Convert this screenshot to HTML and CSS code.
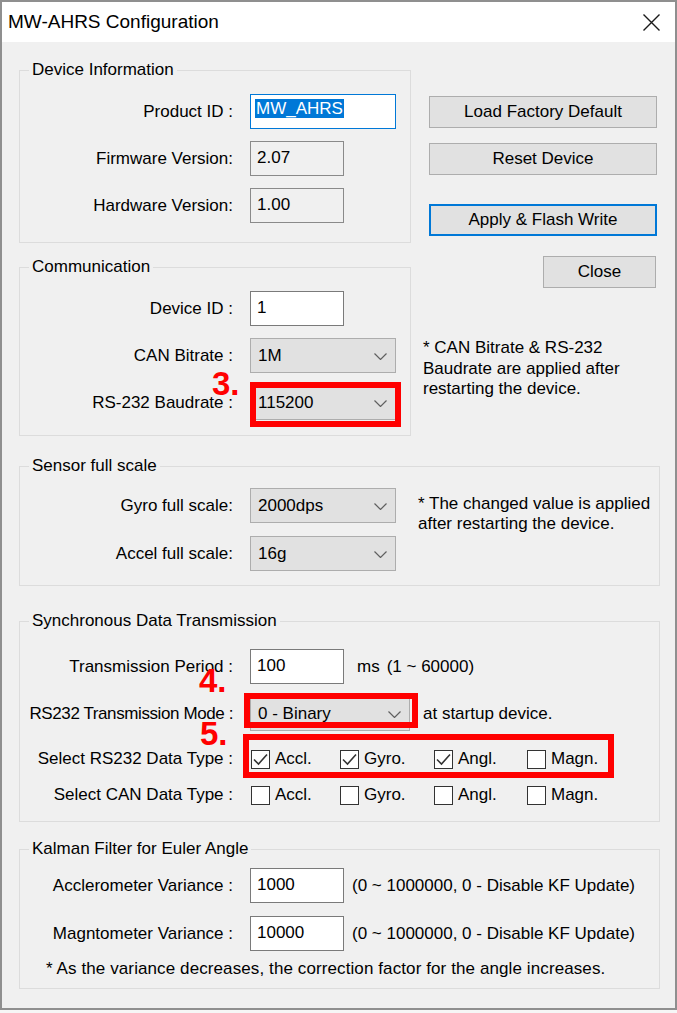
FILE: index.html
```html
<!DOCTYPE html>
<html lang="en">
<head>
    <meta charset="UTF-8">
    <meta name="viewport" content="width=device-width, initial-scale=1.0">
    <link rel="stylesheet" href="styles.css">
    <title>MW-AHRS Configuration</title>
</head>
<body>
<div class="window">
    <div class="titlebar">
        <span class="title">MW-AHRS Configuration</span>
        <svg class="close" width="17" height="17" viewBox="0 0 17 17">
            <path d="M0.5 0.5 L16.5 16.5 M16.5 0.5 L0.5 16.5" stroke="#1a1a1a" stroke-width="1.4" fill="none"/>
        </svg>
    </div>
    <div class="client">
        <div class="top">
            <div class="left">
                <fieldset class="group device">
                    <legend>Device Information</legend>
                    <div class="rows">
                        <div class="row">
                            <label>Product ID :</label>
                            <div class="edit focus w146"><span class="sel">MW_AHRS</span></div>
                        </div>
                        <div class="row gap12">
                            <label>Firmware Version:</label>
                            <div class="edit readonly w94">2.07</div>
                        </div>
                        <div class="row gap12">
                            <label>Hardware Version:</label>
                            <div class="edit readonly w94">1.00</div>
                        </div>
                    </div>
                </fieldset>
                <fieldset class="group comm">
                    <legend>Communication</legend>
                    <div class="rows">
                        <div class="row">
                            <label>Device ID :</label>
                            <div class="edit w94">1</div>
                        </div>
                        <div class="row gap12">
                            <label>CAN Bitrate :</label>
                            <div class="combo w146"><span>1M</span><svg class="chev" width="13" height="7" viewBox="0 0 13 7"><polyline points="0.5,0.5 6.5,6.5 12.5,0.5" fill="none" stroke="#606060" stroke-width="1.2"/></svg></div>
                        </div>
                        <div class="row gap12">
                            <label>RS-232 Baudrate :</label>
                            <div class="combo w146 mark mark3" data-num="3."><span>115200</span><svg class="chev" width="13" height="7" viewBox="0 0 13 7"><polyline points="0.5,0.5 6.5,6.5 12.5,0.5" fill="none" stroke="#606060" stroke-width="1.2"/></svg></div>
                        </div>
                    </div>
                </fieldset>
            </div>
            <div class="right">
                <button class="btn load">Load Factory Default</button>
                <button class="btn reset">Reset Device</button>
                <button class="btn apply">Apply &amp; Flash Write</button>
                <button class="btn close-btn">Close</button>
                <p class="note comm-note">* CAN Bitrate &amp; RS-232<br>Baudrate are applied after<br>restarting the device.</p>
            </div>
        </div>

        <fieldset class="group sensor">
            <legend>Sensor full scale</legend>
            <div class="split">
                <div class="rows">
                    <div class="row">
                        <label>Gyro full scale:</label>
                        <div class="combo w146"><span>2000dps</span><svg class="chev" width="13" height="7" viewBox="0 0 13 7"><polyline points="0.5,0.5 6.5,6.5 12.5,0.5" fill="none" stroke="#606060" stroke-width="1.2"/></svg></div>
                    </div>
                    <div class="row gap13">
                        <label>Accel full scale:</label>
                        <div class="combo w146"><span>16g</span><svg class="chev" width="13" height="7" viewBox="0 0 13 7"><polyline points="0.5,0.5 6.5,6.5 12.5,0.5" fill="none" stroke="#606060" stroke-width="1.2"/></svg></div>
                    </div>
                </div>
                <p class="note sensor-note">* The changed value is applied<br>after restarting the device.</p>
            </div>
        </fieldset>

        <fieldset class="group sync">
            <legend>Synchronous Data Transmission</legend>
            <div class="rows">
                <div class="row">
                    <label>Transmission Period :</label>
                    <div class="edit w94">100</div>
                    <span class="unit">ms</span>
                    <span>(1 ~ 60000)</span>
                </div>
                <div class="row gap12">
                    <label class="tight">RS232 Transmission Mode :</label>
                    <div class="combo w160 mark mark4" data-num="4."><span>0 - Binary</span><svg class="chev" width="13" height="7" viewBox="0 0 13 7"><polyline points="0.5,0.5 6.5,6.5 12.5,0.5" fill="none" stroke="#606060" stroke-width="1.2"/></svg></div>
                    <span class="after">at startup device.</span>
                </div>
                <div class="row gap18">
                    <label>Select RS232 Data Type :</label>
                    <div class="checks mark mark5" data-num="5.">
                        <span class="check"><i class="cb"><svg width="17" height="17" viewBox="0 0 17 17"><polyline points="2,8.5 6.5,13 15,3.5" fill="none" stroke="#333" stroke-width="1.6"/></svg></i>Accl.</span>
                        <span class="check"><i class="cb"><svg width="17" height="17" viewBox="0 0 17 17"><polyline points="2,8.5 6.5,13 15,3.5" fill="none" stroke="#333" stroke-width="1.6"/></svg></i>Gyro.</span>
                        <span class="check"><i class="cb"><svg width="17" height="17" viewBox="0 0 17 17"><polyline points="2,8.5 6.5,13 15,3.5" fill="none" stroke="#333" stroke-width="1.6"/></svg></i>Angl.</span>
                        <span class="check"><i class="cb"></i>Magn.</span>
                    </div>
                </div>
                <div class="row gap16">
                    <label>Select CAN Data Type :</label>
                    <div class="checks">
                        <span class="check"><i class="cb"></i>Accl.</span>
                        <span class="check"><i class="cb"></i>Gyro.</span>
                        <span class="check"><i class="cb"></i>Angl.</span>
                        <span class="check"><i class="cb"></i>Magn.</span>
                    </div>
                </div>
            </div>
        </fieldset>

        <fieldset class="group kalman">
            <legend>Kalman Filter for Euler Angle</legend>
            <div class="rows">
                <div class="row">
                    <label>Acclerometer Variance :</label>
                    <div class="edit w94">1000</div>
                    <span class="hint">(0 ~ 1000000, 0 - Disable KF Update)</span>
                </div>
                <div class="row gap13">
                    <label>Magntometer Variance :</label>
                    <div class="edit w94">10000</div>
                    <span class="hint">(0 ~ 1000000, 0 - Disable KF Update)</span>
                </div>
                <p class="kf-note">* As the variance decreases, the correction factor for the angle increases.</p>
            </div>
        </fieldset>
    </div>
</div>
</body>
</html>
```

FILE: styles.css
```css
body {
    margin: 0;
    background: #f6f6f6;
    font-family: "Liberation Sans", Arial, sans-serif;
    font-size: 17px;
    color: #000;
}

.window {
    width: 677px;
    height: 1010px;
    box-sizing: border-box;
    border: 2px solid #8f8f8f;
    background: #f0f0f0;
}

.titlebar {
    height: 40px;
    background: #fff;
    display: flex;
    align-items: center;
    justify-content: space-between;
    padding: 0 15px 0 6px;
}

.title {
    font-size: 19px;
}

.close {
    display: block;
}

.client {
    padding: 18px 15px 0 17px;
}

.top {
    display: flex;
    align-items: flex-start;
}

.left {
    width: 392px;
    display: flex;
    flex-direction: column;
}

.right {
    margin-left: 12px;
    display: flex;
    flex-direction: column;
    align-items: flex-start;
}

/* group boxes */
.group {
    margin: 0;
    padding: 0;
    min-width: 0;
    border: 1px solid #dcdcdc;
}

.group legend {
    margin-left: 9px;
    padding: 0 3px;
    line-height: 20px;
}

.comm { margin-top: 14px; }
.sensor { margin-top: 20px; }
.sync { margin-top: 25px; }
.kalman { margin-top: 17px; }

.device .rows { padding: 14px 0 19px; }
.comm .rows { padding: 14px 0 15px; }
.sensor .rows { padding: 12px 0 14px; }
.sync .rows { padding: 18px 0 16px; }
.kalman .rows { padding: 9px 0 9px; }

.row {
    display: flex;
    align-items: center;
    min-height: 20px;
}

.row > label {
    flex: none;
    width: 213px;
    margin-right: 17px;
    text-align: right;
    white-space: nowrap;
}

.row > label.tight {
    letter-spacing: -0.4px;
}

.gap12 { margin-top: 12px; }
.gap13 { margin-top: 13px; }
.gap16 { margin-top: 16px; }
.gap18 { margin-top: 18px; }

/* text boxes */
.edit {
    flex: none;
    height: 35px;
    box-sizing: border-box;
    border: 1px solid #7a7a7a;
    background: #fff;
    padding: 6px 6px 0;
    line-height: 20px;
    white-space: nowrap;
}

.edit.readonly {
    background: #f0f0f0;
    border-color: #8a8a8a;
}

.edit.focus {
    border-color: #0078d7;
    padding: 4px 4px 0;
}

.sel {
    display: inline-block;
    background: #0078d7;
    color: #fff;
    line-height: 19px;
    padding: 0 1px;
}

.w94 { width: 94px; }
.w146 { width: 146px; }
.w160 { width: 160px; }

/* combo boxes */
.combo {
    flex: none;
    height: 35px;
    box-sizing: border-box;
    border: 1px solid #adadad;
    background: #e1e1e1;
    display: flex;
    align-items: center;
    justify-content: space-between;
    padding: 0 8px 0 7px;
}

.chev {
    display: block;
    margin-top: 2px;
}

/* buttons */
.btn {
    height: 32px;
    width: 228px;
    margin-left: 6px;
    box-sizing: border-box;
    border: 1px solid #adadad;
    background: #e1e1e1;
    font-family: inherit;
    font-size: 17px;
    color: #000;
    padding: 0;
}

.load { margin-top: 36px; }
.reset { margin-top: 15px; }
.apply {
    margin-top: 29px;
    border: 2px solid #0078d7;
}
.close-btn {
    margin-top: 20px;
    margin-left: 120px;
    width: 113px;
}

.note {
    margin: 0;
    white-space: nowrap;
}

.comm-note {
    margin-top: 50px;
    line-height: 20.5px;
}

.split {
    display: flex;
    align-items: flex-start;
}

.sensor-note {
    margin-left: 22px;
    margin-top: 18px;
    line-height: 20px;
}

.unit { margin-left: 13px; margin-right: 7px; }
.after { margin-left: 13px; }
.hint { margin-left: 8px; white-space: nowrap; }

.kf-note {
    margin: 8px 0 0 26px;
    line-height: 20px;
    white-space: nowrap;
    letter-spacing: 0.1px;
}

/* check boxes */
.checks {
    display: flex;
    align-items: center;
}

.check {
    display: flex;
    align-items: center;
    width: 89px;
    padding-left: 1px;
    box-sizing: border-box;
}

.check:nth-child(2) { width: 94px; }
.check:nth-child(3) { width: 93px; }
.check:nth-child(4) { width: auto; }

.cb {
    flex: none;
    width: 19px;
    height: 19px;
    box-sizing: border-box;
    border: 1px solid #333;
    background: #fff;
    margin-right: 5px;
}

.cb svg {
    display: block;
}

/* red annotation marks drawn over the screenshot */
.mark {
    position: relative;
}

.mark::after {
    content: "";
    position: absolute;
    box-sizing: border-box;
    border: 6px solid #ff0000;
}

.mark::before {
    content: attr(data-num);
    position: absolute;
    color: #ff0000;
    font-weight: bold;
    font-size: 33px;
    line-height: 33px;
    white-space: nowrap;
}

.mark3::after { left: -1px; top: -4px; width: 151px; height: 45px; }
.mark3::before { left: -39px; top: -19px; }

.mark4::after { left: -7px; top: -4px; width: 174px; height: 35px; }
.mark4::before { left: -52px; top: -33px; }

.mark5::after { left: -7px; top: -15px; width: 371px; height: 44px; }
.mark5::before { left: -50px; top: -32px; }
```
